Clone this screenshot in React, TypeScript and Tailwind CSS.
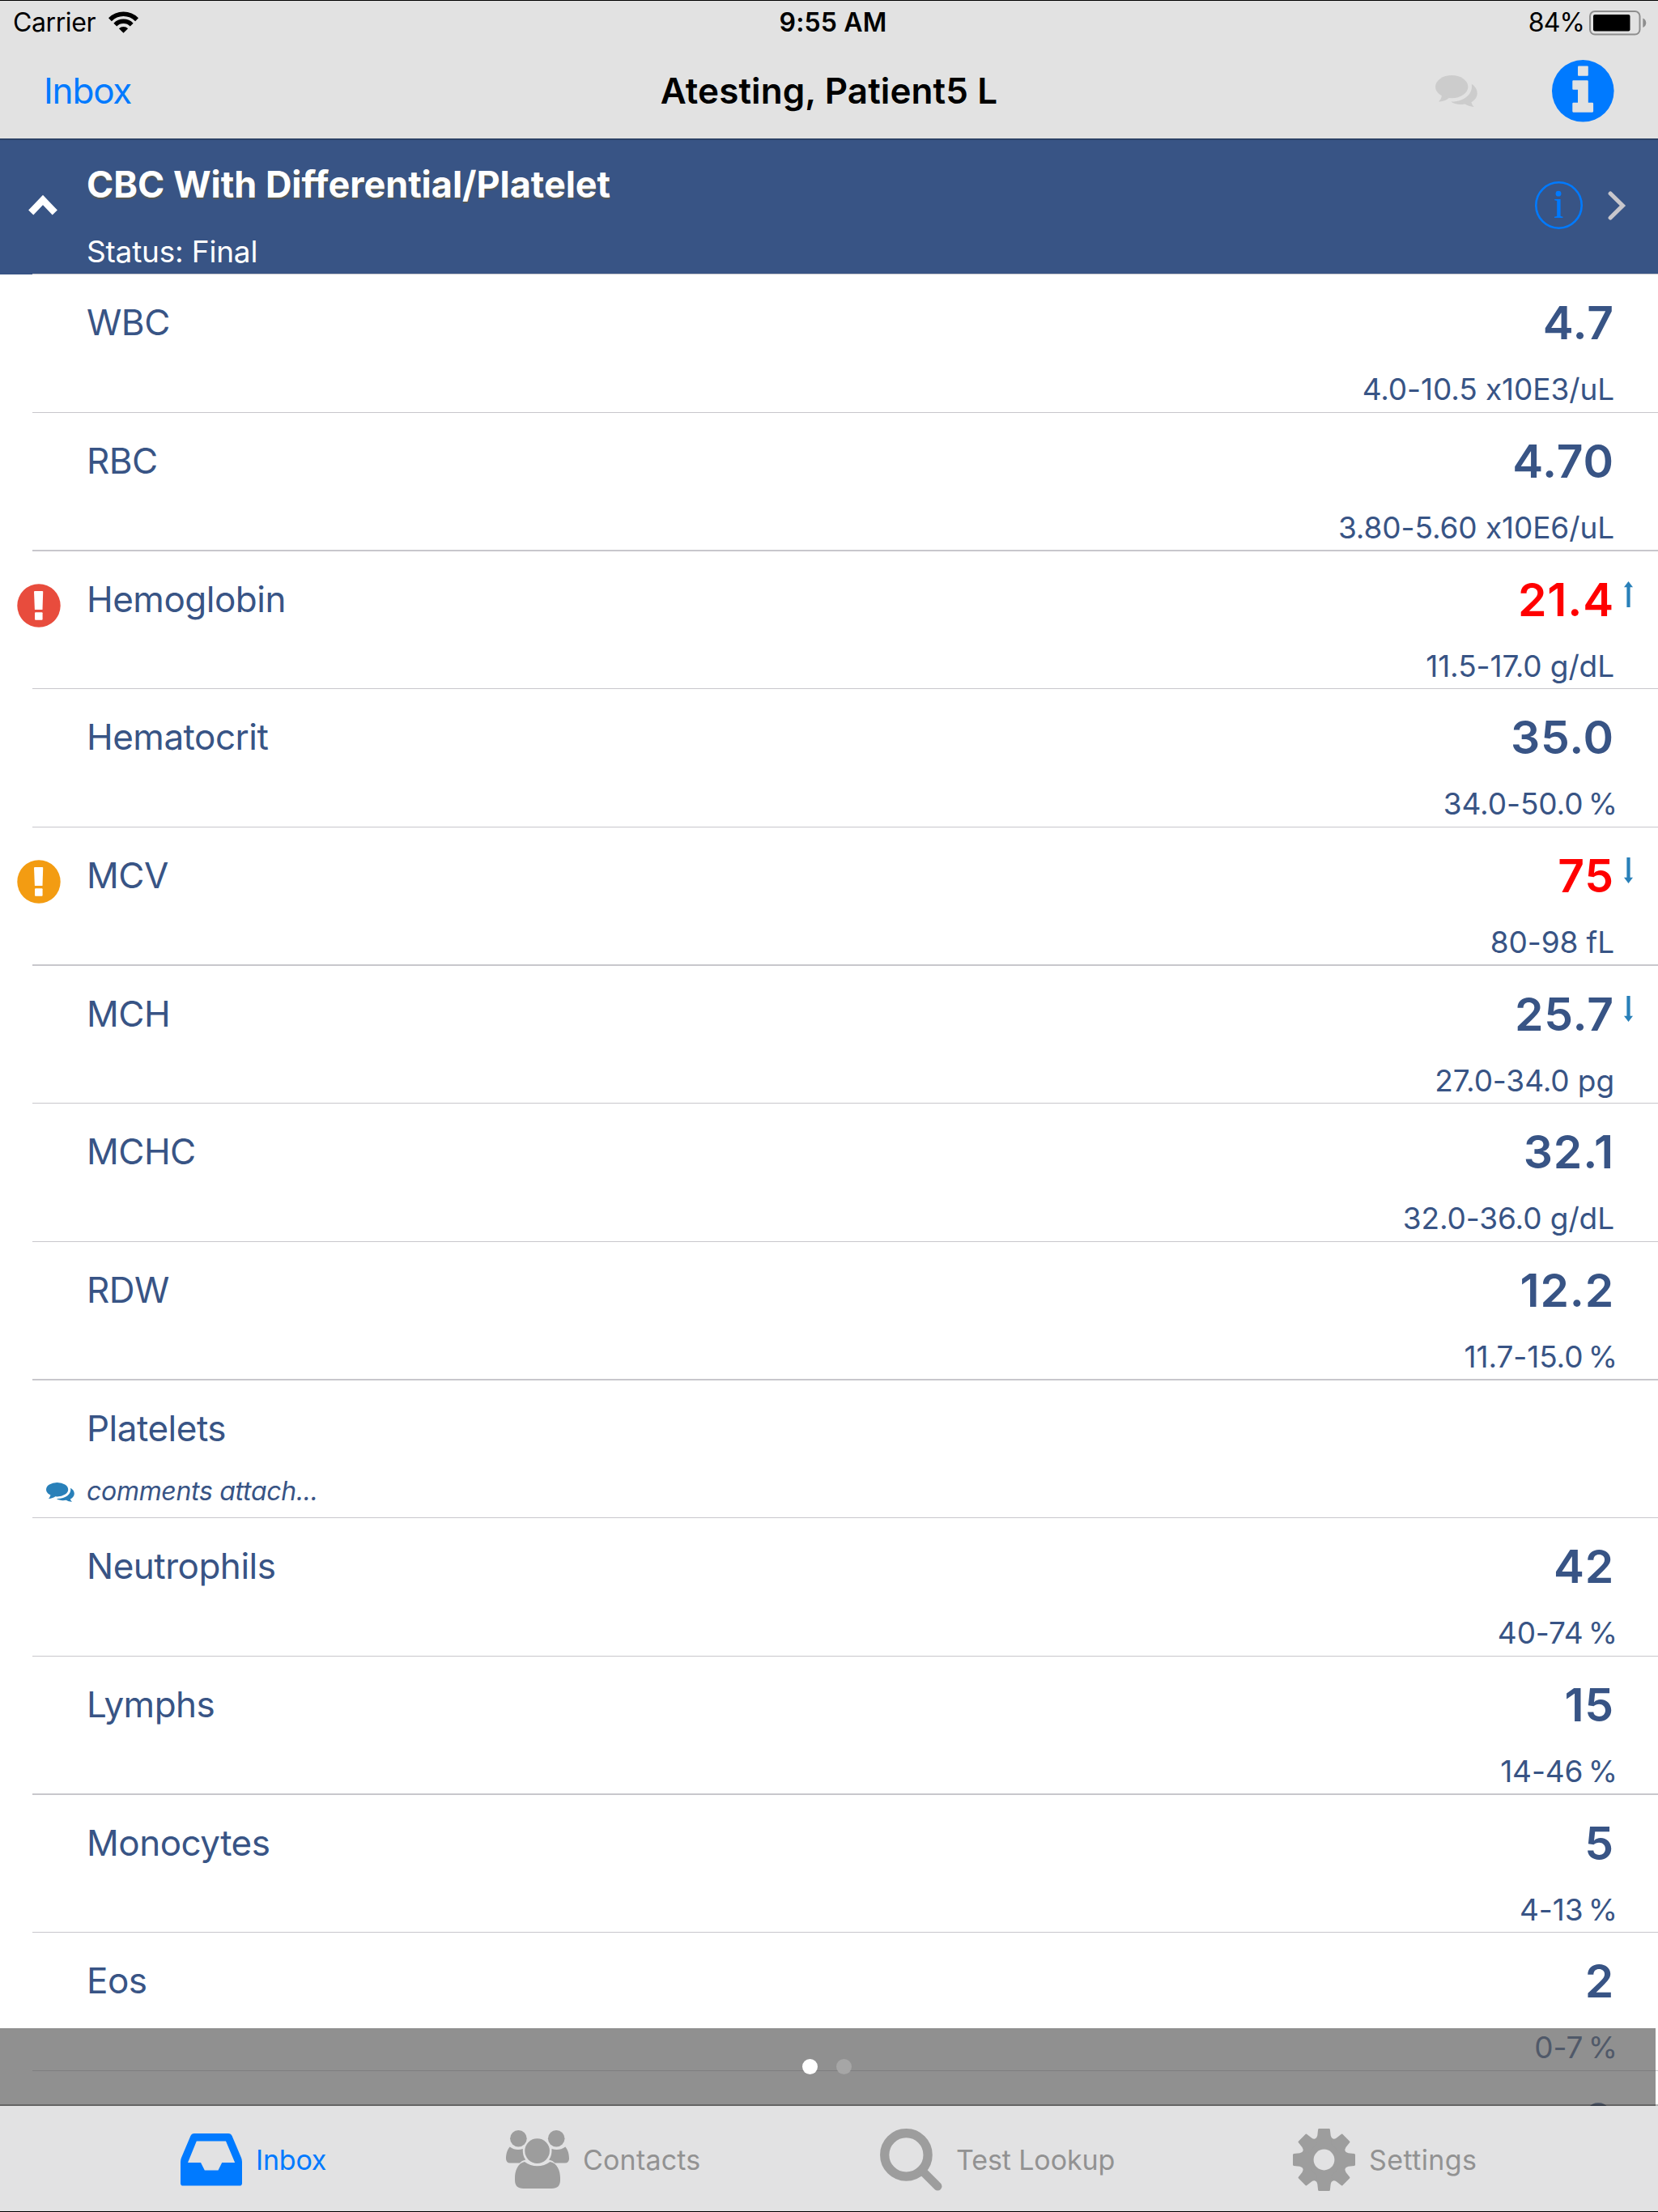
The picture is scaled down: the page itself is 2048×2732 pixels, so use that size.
import clsx from "clsx";

type Result = {
  name: string;
  value?: string;
  range?: string;
  abnormal?: boolean;
  trend?: "up" | "down";
  alert?: "critical" | "warning";
  comment?: string;
};

const results: Result[] = [
  { name: "WBC", value: "4.7", range: "4.0-10.5 x10E3/uL" },
  { name: "RBC", value: "4.70", range: "3.80-5.60 x10E6/uL" },
  { name: "Hemoglobin", value: "21.4", range: "11.5-17.0 g/dL", abnormal: true, trend: "up", alert: "critical" },
  { name: "Hematocrit", value: "35.0", range: "34.0-50.0 %" },
  { name: "MCV", value: "75", range: "80-98 fL", abnormal: true, trend: "down", alert: "warning" },
  { name: "MCH", value: "25.7", range: "27.0-34.0 pg", trend: "down" },
  { name: "MCHC", value: "32.1", range: "32.0-36.0 g/dL" },
  { name: "RDW", value: "12.2", range: "11.7-15.0 %" },
  { name: "Platelets", comment: "comments attach..." },
  { name: "Neutrophils", value: "42", range: "40-74 %" },
  { name: "Lymphs", value: "15", range: "14-46 %" },
  { name: "Monocytes", value: "5", range: "4-13 %" },
  { name: "Eos", value: "2", range: "0-7 %" },
  { name: "Basos", value: "0" },
];

function WifiIcon() {
  return (
    <svg width="37" height="27" viewBox="0 0 37 27" fill="none" stroke="#000">
      <path d="M1.9 10.2 A23.3 23.3 0 0 1 35.1 10.2" strokeWidth="5.6" />
      <path d="M8.3 16.6 A14.3 14.3 0 0 1 28.7 16.6" strokeWidth="5.4" />
      <path d="M12.9 21.2 A8 8 0 0 1 24.1 21.2 L18.5 26.8Z" fill="#000" stroke="none" />
    </svg>
  );
}

function BatteryIcon() {
  return (
    <svg width="71" height="31" viewBox="0 0 71 31">
      <rect x="1" y="1" width="61.5" height="28.6" rx="6" fill="none" stroke="#8e8e8e" strokeWidth="2" />
      <rect x="5" y="5" width="45.5" height="20.4" rx="2" fill="#000" />
      <path d="M66.3 9.5 C71.6 11.5 71.6 19 66.3 21Z" fill="#8e8e8e" />
    </svg>
  );
}

function CommentsIcon({ className }: { className?: string }) {
  return (
    <svg viewBox="0 0 51.5 39.5" className={className} fill="currentColor" preserveAspectRatio="none">
      <ellipse cx="20" cy="14.3" rx="20" ry="14.3" />
      <path d="M8 24.5 C7.5 28.5 6 31 4 33 C10 32.5 14 31 17 28Z" />
      <path d="M44.3 11 C48.7 13.8 51.2 18 51.2 22.5 C51.2 27 48.5 31 44 33.7 C44.4 35.8 45.6 37.8 47.3 39.4 C42.5 39 39 37.8 36.3 35.9 C30 37.2 23 36.4 19 33 C35 33.6 46.5 23.5 44.3 11Z" />
    </svg>
  );
}

function InfoIcon() {
  return (
    <svg width="77" height="77" viewBox="0 0 77 77">
      <circle cx="38.3" cy="38.3" r="38.3" fill="#007aff" />
      <rect x="32" y="7.4" width="12.8" height="12.3" rx="1" fill="#e2e2e2" />
      <path
        d="M26.3 25.3 H43.7 Q44.8 25.3 44.8 26.4 V52.8 H50 Q51.1 52.8 51.1 54 V63.6 Q51.1 64.7 50 64.7 H26.3 Q25.3 64.7 25.3 63.6 V54 Q25.3 52.8 26.3 52.8 H32 V36.8 H26.3 Q25.3 36.8 25.3 35.8 V26.4 Q25.3 25.3 26.3 25.3Z"
        fill="#e2e2e2"
      />
    </svg>
  );
}

function DetailIcon() {
  return (
    <svg width="59" height="59" viewBox="0 0 59 59">
      <circle cx="29.5" cy="29.5" r="28.2" fill="none" stroke="#007aff" strokeWidth="2.6" />
      <circle cx="29" cy="15.2" r="3.4" fill="#007aff" />
      <path d="M24.2 22 H31.6 V43 L34.5 43.8 V45 H24 V43.8 L27.2 43 V24 L24.2 23.3Z" fill="#007aff" />
    </svg>
  );
}

function AlertIcon({ level }: { level: "critical" | "warning" }) {
  return (
    <svg
      width="54"
      height="54"
      viewBox="0 0 54 54"
      className={level === "critical" ? "text-[#e84c3d]" : "text-[#f39c12]"}
    >
      <circle cx="27" cy="27" r="26.7" fill="currentColor" />
      <path d="M21 9.8 Q21 9 22 9 H31.2 Q32.2 9 32.2 9.8 L31.5 32 H21.9Z" fill="#fff" />
      <rect x="22" y="35.3" width="9.6" height="9.5" rx="1" fill="#fff" />
    </svg>
  );
}

function TrendArrow({ direction }: { direction: "up" | "down" }) {
  return (
    <svg
      width="11"
      height="32"
      viewBox="0 0 11 32"
      fill="#2980b9"
      className={clsx(direction === "down" && "rotate-180")}
    >
      <path d="M5.5 0 L11 7.3 H7.6 V32 H3.4 V7.3 H0Z" />
    </svg>
  );
}

function InboxIcon() {
  return (
    <svg width="76" height="65" viewBox="0 0 76 65" fill="#007aff" fillRule="evenodd">
      <path d="M17 0 H59 Q62.3 0 63.6 3 L75 30 Q76 32.3 76 35 V61.5 Q76 64.6 73 64.6 H3 Q0 64.6 0 61.5 V35 Q0 32.3 1 30 L12.4 3 Q13.7 0 17 0Z M19.8 9.6 L9 36 H25 L29.8 45.6 H46.5 L51.2 36 H67.2 L56 9.6Z" />
    </svg>
  );
}

function ContactsIcon() {
  return (
    <svg width="78" height="72" viewBox="0 0 78 72" fill="#9d9d9d">
      <circle cx="15.4" cy="10.3" r="10.3" />
      <circle cx="62.2" cy="10.3" r="10.3" />
      <circle cx="38.6" cy="25.6" r="15.3" />
      <path d="M4.7 20.4 C9.5 24 15 24.8 20.8 23 C20.6 28.5 21.3 32.5 24.2 36.6 C20.8 37.4 18.8 38.6 16.9 40.6 H5.2 Q0 40.3 0 35 C0 29.5 1.5 23.8 4.7 20.4Z" />
      <path d="M73.3 20.4 C68.5 24 62.5 24.8 56.5 23 C56.7 28.5 56 32.5 53.1 36.6 C56.5 37.4 58.5 38.6 60.4 40.6 H72.8 Q78 40.3 78 35 C78 29.5 76.5 23.8 73.3 20.4Z" />
      <path d="M23 39 C32 46 45.5 46 54.5 39 C63.5 40.5 67 50.5 67 59 V61.5 Q67 72 56.5 72 H21.5 Q11 72 11 61.5 V59 C11 50.5 14.5 40.5 23 39Z" />
    </svg>
  );
}

function SearchIcon() {
  return (
    <svg width="77" height="77" viewBox="0 0 77 77" fill="none" stroke="#9d9d9d">
      <circle cx="32.4" cy="32.4" r="26.7" strokeWidth="11.3" />
      <path d="M53 53 L71.2 71.2" strokeWidth="10.5" strokeLinecap="round" />
    </svg>
  );
}

function GearIcon() {
  return (
    <svg width="77" height="77" viewBox="-38.5 -38.5 77 77" fill="#9d9d9d">
      <circle r="20.2" fill="none" stroke="#9d9d9d" strokeWidth="14.6" />
      {[0, 45, 90, 135, 180, 225, 270, 315].map((angle) => (
        <path
          key={angle}
          transform={`rotate(${angle})`}
          d="M-6.3 -38.5 H6.3 Q7.2 -38.5 7.4 -37.3 L8.2 -30 Q8.6 -27 12 -25 L8 -20 H-8 L-12 -25 Q-8.6 -27 -8.2 -30 L-7.4 -37.3 Q-7.2 -38.5 -6.3 -38.5Z"
        />
      ))}
    </svg>
  );
}

function Header() {
  return (
    <header className="h-[173px] border-t border-t-black border-b-2 border-b-[#2b4166] bg-[#e2e2e2] text-black">
      <div className="grid h-[47px] grid-cols-[1fr_auto_1fr] pl-4 pr-3.5 pt-[7px] text-[32px] leading-10">
        <div className="flex gap-4">
          <span className="tracking-[-0.4px]">Carrier</span>
          <div className="pt-1.5">
            <WifiIcon />
          </div>
        </div>
        <span className="ml-2 font-semibold tracking-[0.15px]">9:55 AM</span>
        <div className="flex justify-end gap-1.5">
          <span className="tracking-[-0.9px]">84%</span>
          <div className="pt-[5px]">
            <BatteryIcon />
          </div>
        </div>
      </div>
      <div className="grid h-[123px] grid-cols-[1fr_auto_1fr] items-center pl-[54px] pr-[54px] pt-[5px] text-[44px] leading-[56px]">
        <span className="tracking-[-1.2px] text-[#007aff]">Inbox</span>
        <h1 className="font-semibold tracking-[0.1px]">Atesting, Patient5 L</h1>
        <div className="flex items-center justify-end gap-[92px]">
          <CommentsIcon className="h-[39px] w-[52px] text-[#cccccc]" />
          <InfoIcon />
        </div>
      </div>
    </header>
  );
}

function PanelHeader() {
  return (
    <section className="bg-[#385485] text-white">
      <div className="flex h-[165px]">
        <div className="w-[107px] shrink-0 pl-[35px] pt-[68px]">
          <svg width="36" height="25" viewBox="0 0 36 25" fill="none" stroke="#fff" strokeWidth="8.5">
            <path d="M3.2 21.5 L18 6 L32.8 21.5" />
          </svg>
        </div>
        <div className="flex-1 pt-[27px]">
          <h2 className="text-[45px] font-bold leading-[56px] tracking-[-0.03px] [text-shadow:0_2px_1px_#5a5a50]">
            CBC With Differential/Platelet
          </h2>
          <p className="mt-[33px] text-[37px] leading-[44px] tracking-[-0.2px]">Status: Final</p>
        </div>
        <div className="flex items-center gap-[31px] pb-1 pr-[39px]">
          <DetailIcon />
          <svg width="23" height="36" viewBox="0 0 23 36" fill="none" stroke="#c8c7cc" strokeWidth="5.2">
            <path d="M3.2 3 L18.4 18 L3.2 33" strokeLinecap="round" />
          </svg>
        </div>
      </div>
      <div className="ml-10 h-px bg-[#c8c7cc]" />
    </section>
  );
}

function ResultRow({ result, index }: { result: Result; index: number }) {
  const { name, value, range, abnormal, trend, alert, comment } = result;
  return (
    <li className={clsx("flex shrink-0 flex-col", index % 3 === 2 ? "h-[170px]" : "h-[171px]")}>
      <div className="flex flex-1">
        <div className="flex w-[107px] shrink-0 flex-col">
          {alert && (
            <div className="pl-[21px] pt-10">
              <AlertIcon level={alert} />
            </div>
          )}
          {comment && <CommentsIcon className="ml-[57px] mt-[126px] h-6 w-[35px] text-[#2980b9]" />}
        </div>
        <div className="flex-1 pt-[30.5px]">
          <p className="text-[44px] leading-[56px] tracking-[-0.5px]">{name}</p>
          {comment && (
            <p className="mt-[30.5px] text-[32px] italic leading-10 tracking-[-0.3px]">{comment}</p>
          )}
        </div>
        <div className="flex flex-col items-end pt-7">
          <p
            className={clsx(
              "text-[57px] font-semibold leading-[64px] tracking-[0.8px]",
              abnormal && "text-[#ff0000]"
            )}
          >
            {value}
          </p>
          {range && (
            <p
              className={clsx(
                "mt-7 text-[37px] leading-[44px]",
                range.endsWith("%") ? "-mr-1 tracking-[-0.1px] [word-spacing:-4px]" : "tracking-[-0.1px]"
              )}
            >
              {range}
            </p>
          )}
        </div>
        <div className="w-[54px] shrink-0 pl-3 pt-[37px]">{trend && <TrendArrow direction={trend} />}</div>
      </div>
      <div className={clsx("ml-10 shrink-0 bg-[#c8c7cc]", index % 3 === 1 ? "h-0.5" : "h-px")} />
    </li>
  );
}

const tabs = [
  { label: "Inbox", icon: InboxIcon, className: "w-[402px] text-[#007aff] tracking-[-0.2px]" },
  { label: "Contacts", icon: ContactsIcon, className: "w-[462px] text-[#929292] tracking-[0.2px]" },
  { label: "Test Lookup", icon: SearchIcon, className: "w-[510px] text-[#929292] tracking-[-0.1px]" },
  { label: "Settings", icon: GearIcon, className: "text-[#929292] tracking-[0.4px]" },
];

function TabBar() {
  return (
    <nav className="relative -mt-0.5 flex h-[133px] items-center border-b border-t-2 border-b-black border-t-black/30 bg-[#e2e2e3] bg-clip-padding pl-[223px] pt-0.5">
      {tabs.map(({ label, icon: Icon, className }) => (
        <div key={label} className={clsx("flex items-center gap-4 text-[34px] leading-[44px]", className)}>
          <Icon />
          <span className="pl-px pt-px">{label}</span>
        </div>
      ))}
    </nav>
  );
}

export default function App() {
  return (
    <div className="h-[2732px] w-[2048px] overflow-hidden bg-white font-['Inter','Liberation_Sans',sans-serif] [font-feature-settings:'calt'_0]">
      <Header />
      <PanelHeader />
      <main className="relative h-[2262px] overflow-hidden">
        <ul className="flex flex-col text-[#385485]">
          {results.map((result, i) => (
            <ResultRow key={result.name} result={result} index={i} />
          ))}
        </ul>
        {/* page indicator floating over the list */}
        <div className="absolute bottom-0 left-0 flex h-24 w-[2045px] justify-center gap-[23px] bg-[#5b5b5b]/68 pr-0.5 pt-[38px]">
          <span className="size-[19px] rounded-full bg-white" />
          <span className="size-[19px] rounded-full bg-[#a6a6a6]" />
        </div>
      </main>
      <TabBar />
    </div>
  );
}
